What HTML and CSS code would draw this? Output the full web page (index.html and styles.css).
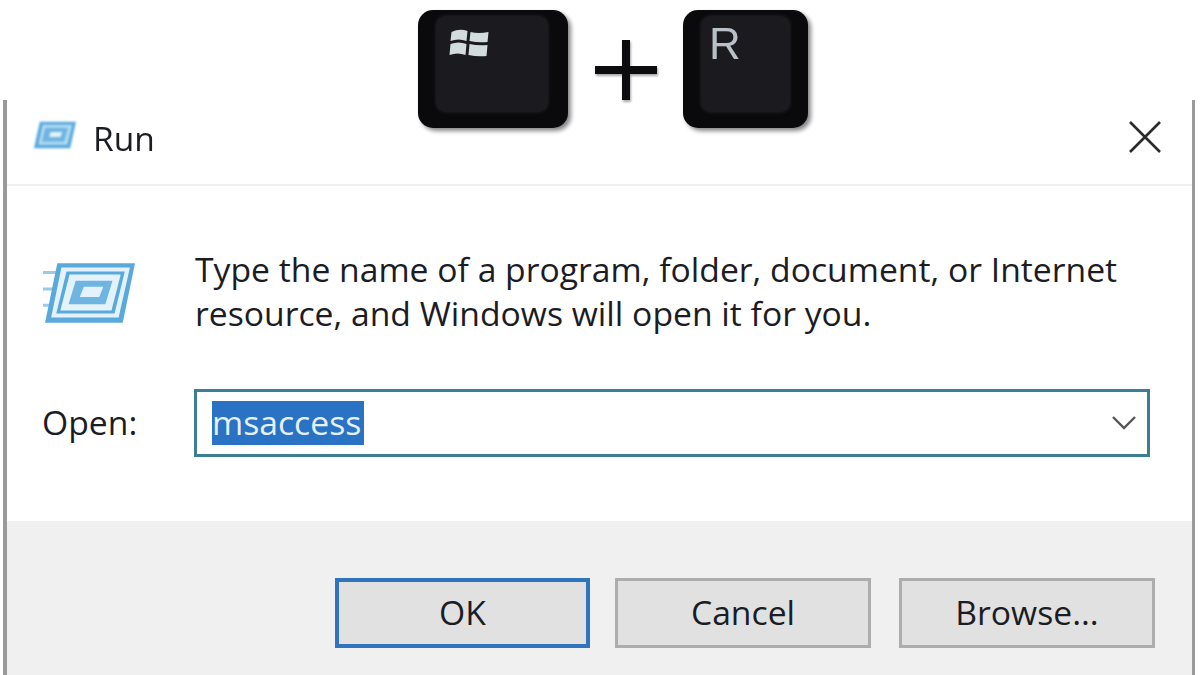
FILE: index.html
```html
<!DOCTYPE html>
<html lang="en">
<head>
<meta charset="utf-8">
<title>Run</title>
<link rel="stylesheet" href="styles.css">
</head>
<body>
<div class="keys">
  <div class="key key-win">
    <div class="key-top">
      <svg class="win-logo" viewBox="0 0 40 30" aria-hidden="true">
        <path d="M2 4 Q10 0 18 3 L17 13 Q9 10 1 13 Z" />
        <path d="M21 4 Q29 6 39 4 L38 14 Q29 15 20 13 Z" />
        <path d="M1 16 Q9 13 17 16 L16 27 Q8 24 0 27 Z" />
        <path d="M20 16 Q29 18 38 17 L37 28 Q28 29 19 27 Z" />
      </svg>
    </div>
  </div>
  <svg class="plus" viewBox="0 0 62 60" aria-hidden="true"><path d="M0 26h62v8H0zM27 0h8v60h-8z"/></svg>
  <div class="key key-r"><div class="key-top"><span class="key-label">R</span></div></div>
</div>
<main class="window">
  <header class="titlebar">
    <svg class="run-icon-small" viewBox="0 0 90 60" aria-hidden="true">
      <path class="ic-fill" d="M14 3H88L76 57H2Z"/>
      <path class="ic-soft" d="M20 9H80L70 50H11Z"/>
      <path class="ic-mid" d="M25 15H72L64 44H18Z"/>
      <path class="ic-white" d="M36 24H60L56 34H33Z"/>
    </svg>
    <span class="title">Run</span>
    <svg class="close" viewBox="0 0 32 32" aria-hidden="true"><path d="M1 1L31 31M31 1L1 31"/></svg>
  </header>
  <section class="content">
    <div class="intro">
      <svg class="run-icon" viewBox="0 0 90 60" aria-hidden="true">
        <path class="ic-lines" d="M0 10H16M0 26H12M0 42H9"/>
        <path class="ic-fill" d="M14 1H90L78 59H2Z"/>
        <path class="ic-white" d="M18 5H85L74 54H8Z"/>
        <path class="ic-fill" d="M23 9H80L70 50H13Z"/>
        <path class="ic-white" d="M26 12H76L67 47H17Z"/>
        <path class="ic-mid" d="M32 18H68L61 41H25Z"/>
        <path class="ic-white" d="M40 24H59L55 34H36Z"/>
      </svg>
      <p class="desc">Type the name of a program, folder, document, or Internet<br>resource, and Windows will open it for you.</p>
    </div>
    <div class="open-row">
      <label class="open-label">Open:</label>
      <div class="combo">
        <span class="selected">msaccess</span>
        <svg class="chevron" viewBox="0 0 24 14" aria-hidden="true"><path d="M1 1L12 12L23 1"/></svg>
      </div>
    </div>
  </section>
  <footer class="footer">
    <button class="btn btn-default">OK</button>
    <button class="btn btn-cancel">Cancel</button>
    <button class="btn">Browse...</button>
  </footer>
</main>
</body>
</html>
```
FILE: styles.css
```css
* { box-sizing: border-box; }
html, body { margin: 0; padding: 0; }
body {
  width: 1200px;
  height: 675px;
  overflow: hidden;
  background: #fff;
  position: relative;
  font-family: "Open Sans", "Noto Sans", sans-serif;
  color: #1c1c24;
  padding: 100px 5px 0 3px;
}
.keys {
  position: absolute;
  z-index: 2;
  left: 418px;
  top: 10px;
  display: flex;
  align-items: flex-start;
  filter: blur(.6px);
}
.key {
  height: 118px;
  background: #0a0a0c;
  border-radius: 15px;
  box-shadow: 3px 3px 4px rgba(70,70,70,.65);
  padding: 6px 20px 16px 18px;
}
.key-win { width: 150px; }
.key-r { width: 125px; padding-right: 18px; }
.key-top {
  height: 100%;
  background: #1b1b1f;
  border-radius: 10px;
  position: relative;
  box-shadow: 0 0 3px 1px #1b1b1f;
}
.win-logo {
  position: absolute;
  left: 13px;
  top: 12px;
  width: 41px;
  height: 30px;
  fill: #d3dcdc;
}
.plus {
  width: 62px;
  height: 60px;
  margin: 30px 26px 0 27px;
  fill: #0c0c0e;
  filter: drop-shadow(1px 2px 1px rgba(80,80,80,.5));
}
.key-label {
  position: absolute;
  left: 8px;
  top: -3px;
  font-family: "Liberation Sans", sans-serif;
  font-size: 44px;
  line-height: 62px;
  color: #b9c0c8;
}
.window {
  height: 575px;
  border-left: 4px solid #9a9a9a;
  border-right: 3px solid #9a9a9a;
  display: flex;
  flex-direction: column;
  filter: blur(.45px);
}
.titlebar {
  height: 86px;
  flex: none;
  display: flex;
  align-items: flex-start;
  padding: 20px 31px 0 26px;
  border-bottom: 2px solid #f0f0ee;
}
.run-icon-small { width: 44px; height: 30px; flex: none; filter: blur(.8px); }
.title {
  font-size: 33.5px;
  line-height: 36px;
  margin-left: 16px;
  flex: 1;
  font-weight: 500;
}
.close {
  width: 32px;
  height: 32px;
  margin-top: 1px;
  fill: none;
  stroke: #2b2b2b;
  stroke-width: 2.6;
}
.ic-fill { fill: #5aa9dc; }
.ic-soft { fill: #b5dcf3; }
.ic-white { fill: #e4f3fb; }
.ic-mid { fill: #6fb5e2; }
.ic-lines { fill: none; stroke: #9cc9e6; stroke-width: 3; }
.content {
  flex: 1;
  display: flex;
  flex-direction: column;
  background: #fff;
  padding: 0 42px 0 34px;
}
.intro {
  display: flex;
  align-items: flex-start;
  height: 203px;
  padding-top: 61px;
}
.run-icon {
  width: 92px;
  height: 62px;
  flex: none;
  margin: 15px 0 0 2px;
  filter: blur(.6px);
}
.desc {
  margin: 0 0 0 60px;
  font-size: 33.7px;
  line-height: 44px;
  white-space: nowrap;
  font-weight: 500;
}
.open-row {
  display: flex;
  align-items: center;
  height: 68px;
}
.open-label {
  font-size: 33.7px;
  line-height: 44px;
  width: 153px;
  flex: none;
  font-weight: 500;
  padding: 0 0 2px 1px;
}
.combo {
  flex: 1;
  height: 68px;
  border: 3px solid #3d7f92;
  display: flex;
  align-items: center;
  justify-content: space-between;
  padding: 0 11px 0 15px;
  background: #fff;
}
.selected {
  background: #2a72c4;
  color: #e6f0fa;
  font-size: 33.7px;
  line-height: 42px;
  height: 44px;
  width: 152px;
  white-space: nowrap;
}
.chevron {
  width: 24px;
  height: 14px;
  fill: none;
  stroke: #555;
  stroke-width: 2.4;
}
.footer {
  height: 154px;
  flex: none;
  background: #f0f0f0;
  display: flex;
  justify-content: flex-end;
  align-items: flex-start;
  padding: 57px 37px 0 0;
}
.btn {
  width: 256px;
  height: 70px;
  background: #e1e1e1;
  border: 3px solid #adadad;
  font-family: inherit;
  font-size: 33.7px;
  font-weight: 500;
  line-height: 44px;
  color: #1c1c24;
  padding: 0 0 2px;
}
.btn-default { border: 4px solid #2f74bd; width: 255px; }
.btn-cancel { margin: 0 28px 0 25px; }
```
